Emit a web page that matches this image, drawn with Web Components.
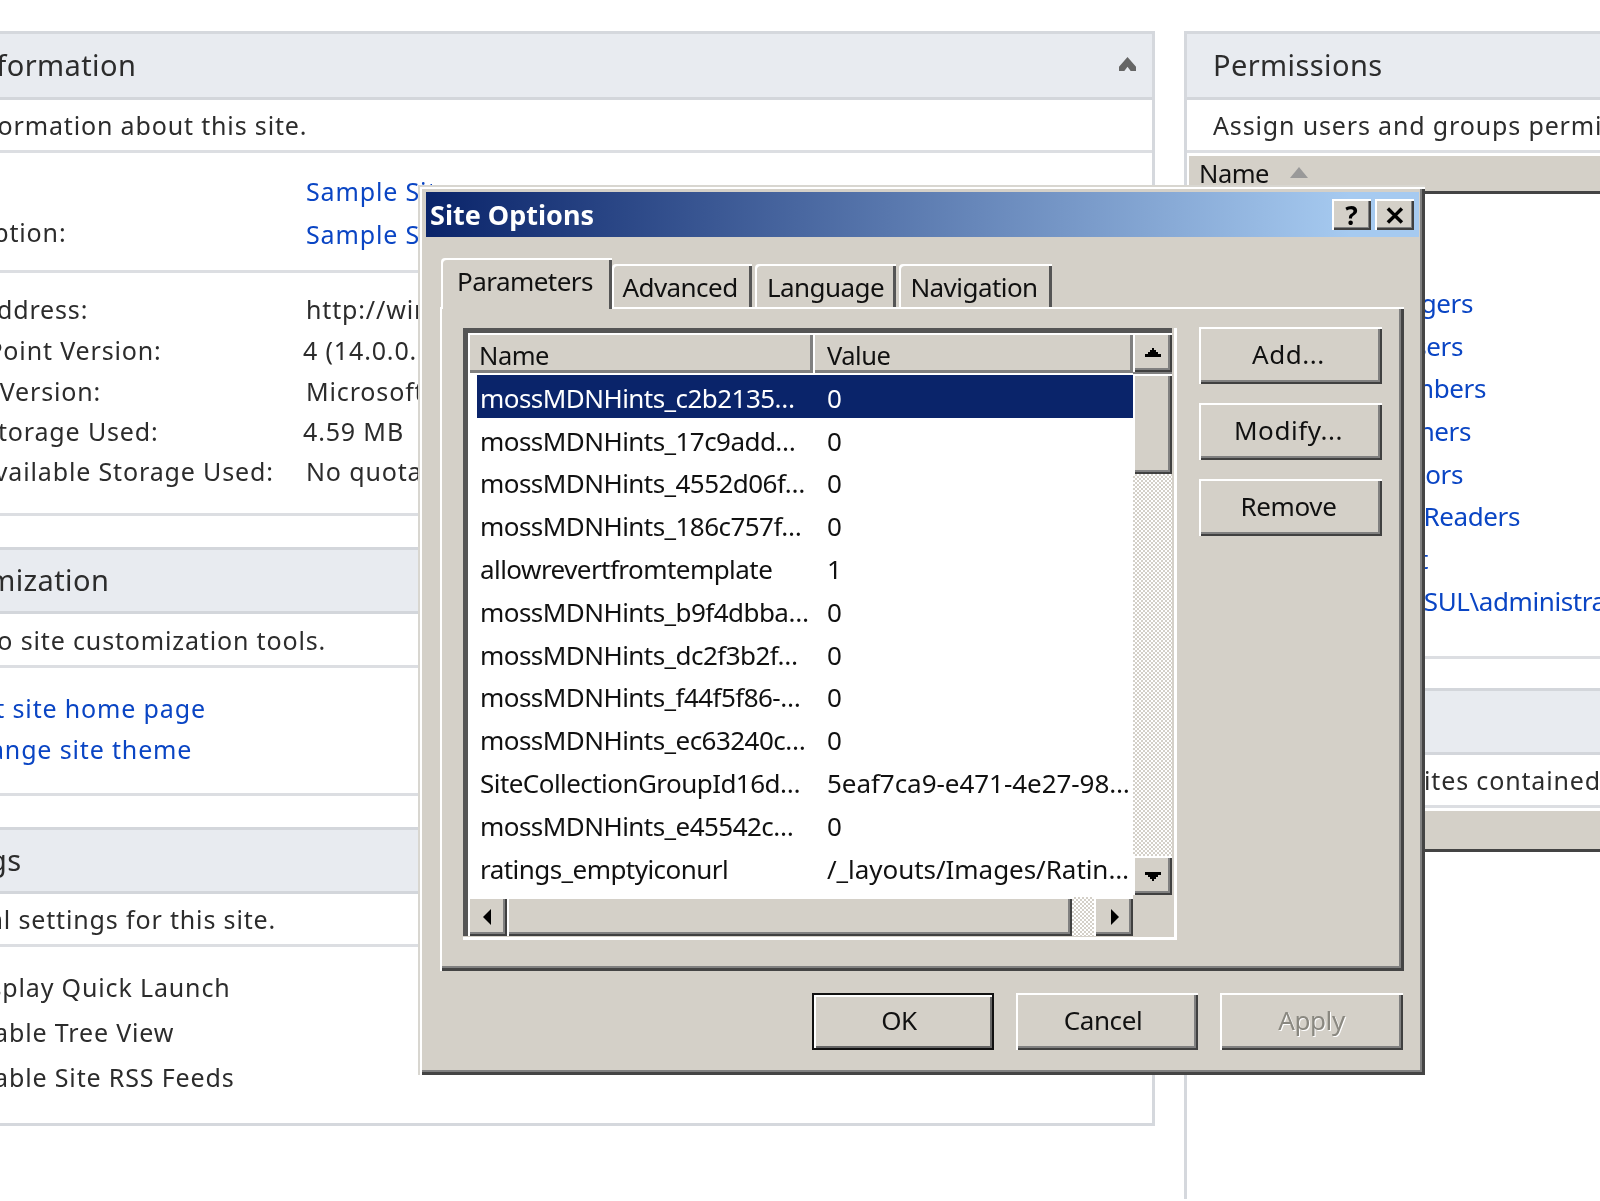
<!DOCTYPE html>
<html><head><meta charset="utf-8"><style>
html,body{margin:0;padding:0;background:#fff;height:1201px;overflow:hidden}
</style></head><body>
<sp-page></sp-page>
<script>
const UI='"Noto Sans","Liberation Sans",sans-serif';
const el=(name,css,html)=>{customElements.define(name,class extends HTMLElement{constructor(){super();this.attachShadow({mode:'open'}).innerHTML='<style>'+css+'</style>'+(typeof html==='function'?html(this):html);} });};
const BEV='inset 2px 2px 0 #fff,inset -2px -2px 0 #404040,inset -4px -4px 0 #808080';
el('sp-band',`:host{display:flex;align-items:center;justify-content:space-between;box-sizing:border-box;height:66px;background:#e8ebf0;border:solid #d3d6db;border-width:0 0 3px;font-size:29px;color:#2c2c2c;letter-spacing:.4px;padding:0 16px 3px var(--x,0);white-space:nowrap;flex:none}
:host([top]){border-top-width:3px;height:67px}`,`<slot></slot>`);
el('sp-line',`:host{display:flex;align-items:center;box-sizing:border-box;font-size:25px;letter-spacing:.85px;color:#2c2c2c;white-space:nowrap;height:var(--h,41px);margin-left:var(--x,0)}`,`<slot></slot>`);
el('sp-kv',`:host{display:flex;align-items:center;font-size:25px;letter-spacing:.85px;color:#2c2c2c;white-space:nowrap;height:var(--h,41px)}
.k{width:403px;padding-left:var(--x,0);box-sizing:border-box;flex:none}
::slotted(a){color:#0a45c4;text-decoration:none}`,`<div class="k"><slot name="k"></slot></div><div><slot></slot></div>`);
el('sp-btn',`:host{display:flex;align-items:center;justify-content:center;box-sizing:border-box;background:#d4d0c8;color:#111;font-size:26px;letter-spacing:var(--ls,-.4px);width:var(--bw,183px);height:57px;box-shadow:${BEV};padding:0 var(--pr,0) 3px 0;flex:none}
:host([default]){box-shadow:inset 0 0 0 2px #111,inset 4px 4px 0 #fff,inset -4px -4px 0 #666}
:host([disabled]){color:#8a8880;text-shadow:1px 1px 0 #fff}`,`<slot></slot>`);
el('sp-tab',`:host{display:flex;align-items:center;justify-content:center;box-sizing:border-box;background:#d4d0c8;color:#111;font-size:26px;letter-spacing:-.55px;height:43px;width:var(--w);border-top-left-radius:4px;box-shadow:inset 2px 2px 0 #fff,inset -3px 0 0 #555;flex:none;padding:2px var(--pr,0) 0 0}
:host([active]){height:51px;padding:0 var(--pr,0) 6px 0;position:relative;z-index:1;margin-bottom:-2px}`,`<slot></slot>`);
el('sp-arrow',`:host{display:flex;align-items:center;justify-content:center;box-sizing:border-box;flex:none;background:#d4d0c8;width:39px;height:39px;box-shadow:${BEV}}
svg{width:18px;height:18px;display:block}`,h=>{const d={u:'M8 4H10V6H12V8H14V10H17V13H1V10H4V8H6V6H8Z',d:'M1 5H17V8H14V10H12V12H10V14H8V12H6V10H4V8H1Z',l:'M4 9 12 1V17Z',r:'M14 9 6 1V17Z'}[h.getAttribute('dir')];return `<svg viewBox="0 0 18 18"><path d="${d}" fill="#000"/></svg>`});
const rows=[['mossMDNHints_c2b2135…','0'],['mossMDNHints_17c9add…','0'],['mossMDNHints_4552d06f…','0'],['mossMDNHints_186c757f…','0'],['allowrevertfromtemplate','1'],['mossMDNHints_b9f4dbba…','0'],['mossMDNHints_dc2f3b2f…','0'],['mossMDNHints_f44f5f86-…','0'],['mossMDNHints_ec63240c…','0'],['SiteCollectionGroupId16d…','5eaf7ca9-e471-4e27-98…'],['mossMDNHints_e45542c…','0'],['ratings_emptyiconurl','/_layouts/Images/Ratin…']];
el('sp-list',`:host{display:block;box-sizing:border-box;width:714px;height:612px;position:relative;box-shadow:inset -3px -3px 0 #fff;flex:none}
.in{width:709px;height:608px;box-sizing:border-box;border:solid #555;border-width:5px 0 0 5px;background:#fff;display:grid;grid-template-columns:665px 39px;grid-template-rows:564px 39px}
.main{overflow:hidden;display:flex;flex-direction:column;grid-column:1;grid-row:1}
.hd{display:flex;height:40px;flex:none;font-size:25.5px;letter-spacing:-.5px;color:#111;background:#808080}
.hd div{background:#d4d0c8;box-shadow:inset 2px 2px 0 #fff,inset -3px -3px 0 #808080;display:flex;align-items:center;padding:3px 0 0 14px;box-sizing:border-box}
.hd .n{width:345px;padding-left:11px}.hd .v{flex:1}
.r{display:grid;grid-template-columns:346px 1fr;height:42.8px;font-size:26px;letter-spacing:-.55px;align-items:center;color:#111;white-space:nowrap;flex:none;margin-left:9px;box-sizing:border-box;padding-top:3px}
.r span:first-child{padding-left:3px;overflow:hidden}.r span:last-child{padding-left:4px;overflow:hidden;letter-spacing:-.05px}
.r.s{background:#0a246a;color:#fff}
.gap{height:2px;flex:none}
.v-s{display:flex;flex-direction:column;grid-column:2;grid-row:1;background:#d4d0c8}
.thumb{height:100px;background:#d4d0c8;box-shadow:${BEV};flex:none}
.track{flex:1;background:repeating-conic-gradient(#d4d0c8 0 25%,#fff 0 50%) 0 0/4px 4px}
.h-s{display:flex;grid-column:1;grid-row:2}
.h-s .thumb{height:auto;width:565px}
.cor{background:#d4d0c8;grid-column:2;grid-row:2}`,
`<div class="in"><div class="main"><div class="hd"><div class="n">Name</div><div class="v">Value</div></div><div class="gap"></div>${rows.map((r,i)=>`<div class="r${i?'':' s'}"><span>${r[0]}</span><span>${r[1]}</span></div>`).join('')}</div>
<div class="v-s"><sp-arrow dir="u"></sp-arrow><div style="height:2px;flex:none;background:#808080"></div><div class="thumb"></div><div class="track"></div><sp-arrow dir="d" style="margin-bottom:2px"></sp-arrow></div>
<div class="h-s"><sp-arrow dir="l"></sp-arrow><div class="thumb"></div><div class="track"></div><sp-arrow dir="r"></sp-arrow></div><div class="cor"></div></div>`);
el('sp-dialog',`:host{position:absolute;left:418px;top:185px;width:1007px;height:890px;box-sizing:border-box;background:#d4d0c8;padding:7px 6px 6px 8px;font-family:${UI};
box-shadow:inset 2px 2px 0 #d8d6d0,inset 4px 4px 0 #fff,inset -3px -3px 0 #444,inset -5px -5px 0 #808080;color:#111}
.t{height:45px;background:linear-gradient(90deg,#0a246a,#a6caf0 93%);display:flex;align-items:center;color:#fff;font-weight:700;font-size:27px;padding:0 5px 0 4px}
.t b{flex:1;font-weight:700}
.tb{width:39px;height:31px;background:#d4d0c8;margin-left:4px;box-shadow:inset 2px 2px 0 #fff,inset -2px -2px 0 #404040,inset -3px -3px 0 #808080;color:#000;font-weight:700;display:flex;align-items:center;justify-content:center;font-size:26px;line-height:1}
.body{padding:21px 0 0 14px}
.tabs{display:flex;align-items:flex-end;height:49px;padding-left:1px}
.page{box-sizing:border-box;width:964px;height:664px;box-shadow:inset 2px 2px 0 #fff,inset -3px -3px 0 #444,inset -5px -5px 0 #808080;padding:21px 0 0 23px;display:flex;gap:22px}
.side{display:flex;flex-direction:column;gap:19px;margin-top:-1px}
.foot{display:flex;justify-content:flex-end;gap:22px;padding:22px 0 0;width:963px}
.foot sp-btn{--bw:182px;--pr:8px}`,
`<div class="t"><b>Site Options</b><div class="tb">?</div><div class="tb">✕</div></div>
<div class="body"><div class="tabs"><sp-tab active style="--w:171px;--pr:3px">Parameters</sp-tab><sp-tab style="--w:140px;margin-right:3px;--pr:4px">Advanced</sp-tab><sp-tab style="--w:141px;margin-right:3px">Language</sp-tab><sp-tab style="--w:153px;--pr:3px">Navigation</sp-tab></div>
<div class="page"><sp-list></sp-list><div class="side"><sp-btn style="--ls:.55px;--pr:4px">Add...</sp-btn><sp-btn style="--ls:.55px;--pr:4px">Modify...</sp-btn><sp-btn style="--pr:4px">Remove</sp-btn></div></div>
<div class="foot"><sp-btn default>OK</sp-btn><sp-btn>Cancel</sp-btn><sp-btn disabled style="--pr:0;--bw:183px">Apply</sp-btn></div></div>`);
const tree=[['Hierarchy Managers',286],['Quick Deploy Users',276],['Sample Site Members',299],['Sample Site Owners',284],['Sample Site Visitors',276],['Style Resource Readers',333],['System Account',241]];
el('sp-page',`:host{display:block;position:relative;width:1600px;height:1201px;overflow:hidden;background:#fff;font-family:${UI};color:#2c2c2c;filter:blur(.45px)}
.wrap{display:flex;gap:29px;margin-left:-100px;padding-top:31px;align-items:flex-start}
.col{box-sizing:border-box;border:solid #d5d8dd;display:flex;flex-direction:column}
.l{flex:none;width:1255px;height:1095px;border-width:3px}
.r{flex:none;width:600px;height:1168px;border-width:3px 0 0 3px}
.d{height:53px;display:flex;align-items:center;flex:none;box-sizing:border-box;border-bottom:3px solid #dcdee2}
.d2{height:54px}
.blk{box-sizing:border-box;border-bottom:3px solid #dcdee2;flex:none}
.gap{height:31px;flex:none}
a{color:#0a45c4;text-decoration:none}
.chev{width:17px;height:14px;display:block}
.th{height:38px;background:#d4d0c8;border-bottom:3px solid #444;display:flex;align-items:center;padding:0 0 1px 10px;font-size:25.5px;letter-spacing:-.5px;color:#111;gap:21px;margin:3px 0 0 2px;flex:none;box-sizing:border-box}
.th svg{width:18px;height:12px}
.tr{padding:88px 0 0;border-bottom:3px solid #dcdee2;height:465px;box-sizing:border-box;flex:none}
.tr div{height:42.6px;display:flex;align-items:center;justify-content:flex-end;font-size:26px;letter-spacing:-.4px;color:#0a45c4;white-space:nowrap}
.tr .adm{justify-content:flex-start;padding-left:182px;width:auto}
.foot{height:38px;background:#d4d0c8;border-bottom:3px solid #444;border-top:3px solid #fff;box-sizing:content-box;flex:none}`,
`<div class="wrap">
<div class="col l">
<sp-band style="--x:5px"><span>Site Information</span><svg class="chev" viewBox="0 0 16 13"><path d="M8 0 16 9V13H11L8 9 5 13H0V9Z" fill="#666"/></svg></sp-band>
<div class="d"><sp-line style="--x:-4px;--h:48px">View information about this site.</sp-line></div>
<div class="blk" style="height:120px;padding-top:17px">
<sp-kv><span slot="k" style="visibility:hidden">Title:</span><a>Sample Site</a></sp-kv>
<sp-kv style="--x:12px"><span slot="k">Description:</span><a style="margin-top:4px;display:block">Sample Site Description</a></sp-kv>
</div>
<div class="blk" style="height:243px;padding-top:15px">
<sp-kv style="--x:15px;--h:41px"><span slot="k">Web Address:</span><span>http://win-site/sites/sample</span></sp-kv>
<sp-kv style="--x:13px;--h:41.5px"><span slot="k">SharePoint Version:</span><span style="margin-left:-3px">4 (14.0.0.6029)</span></sp-kv>
<sp-kv style="--x:9px;--h:40.5px"><span slot="k">Server Version:</span><span>Microsoft SQL Server</span></sp-kv>
<sp-kv style="--x:12px;--h:40px"><span slot="k">Total Storage Used:</span><span style="margin-left:-3px">4.59 MB</span></sp-kv>
<sp-kv style="--x:46px;--h:40px"><span slot="k">% Available Storage Used:</span><span>No quota set</span></sp-kv>
</div>
<div class="gap"></div>
<sp-band top style="--x:5px"><span>Customization</span></sp-band>
<div class="d d2"><sp-line style="--x:-6px;--h:48px">Access to site customization tools.</sp-line></div>
<div class="blk" style="height:128px;padding-top:19px">
<sp-line style="--x:54px"><a>Edit site home page</a></sp-line>
<sp-line style="--x:54px"><a>Change site theme</a></sp-line>
</div>
<div class="gap"></div>
<sp-band top style="--x:5px"><span>Settings</span></sp-band>
<div class="d"><sp-line style="--x:10px;--h:48px">General settings for this site.</sp-line></div>
<div style="padding-top:17px;--h:45px">
<sp-line style="--x:60px">Display Quick Launch</sp-line>
<sp-line style="--x:60px">Enable Tree View</sp-line>
<sp-line style="--x:60px">Enable Site RSS Feeds</sp-line>
</div>
</div>
<div class="col r">
<sp-band style="--x:26px"><span>Permissions</span></sp-band>
<div class="d"><sp-line style="--x:26px;--h:48px">Assign users and groups permissions to this site.</sp-line></div>
<div class="th"><span>Name</span><svg viewBox="0 0 18 12"><path d="M9 0 18 11H0Z" fill="#999"/></svg></div>
<div class="tr">${tree.map(t=>`<div style="width:${t[1]}px">${t[0]}</div>`).join('')}<div class="adm">CONSUL\\administrator</div></div>
<div style="height:29px;flex:none"></div>
<sp-band top></sp-band>
<div class="d"><sp-line style="--x:69px;--h:48px">Lists all sub-sites contained in this site.</sp-line></div>
<div class="foot"></div>
</div>
</div>
<sp-dialog></sp-dialog>`);
</script></body></html>
